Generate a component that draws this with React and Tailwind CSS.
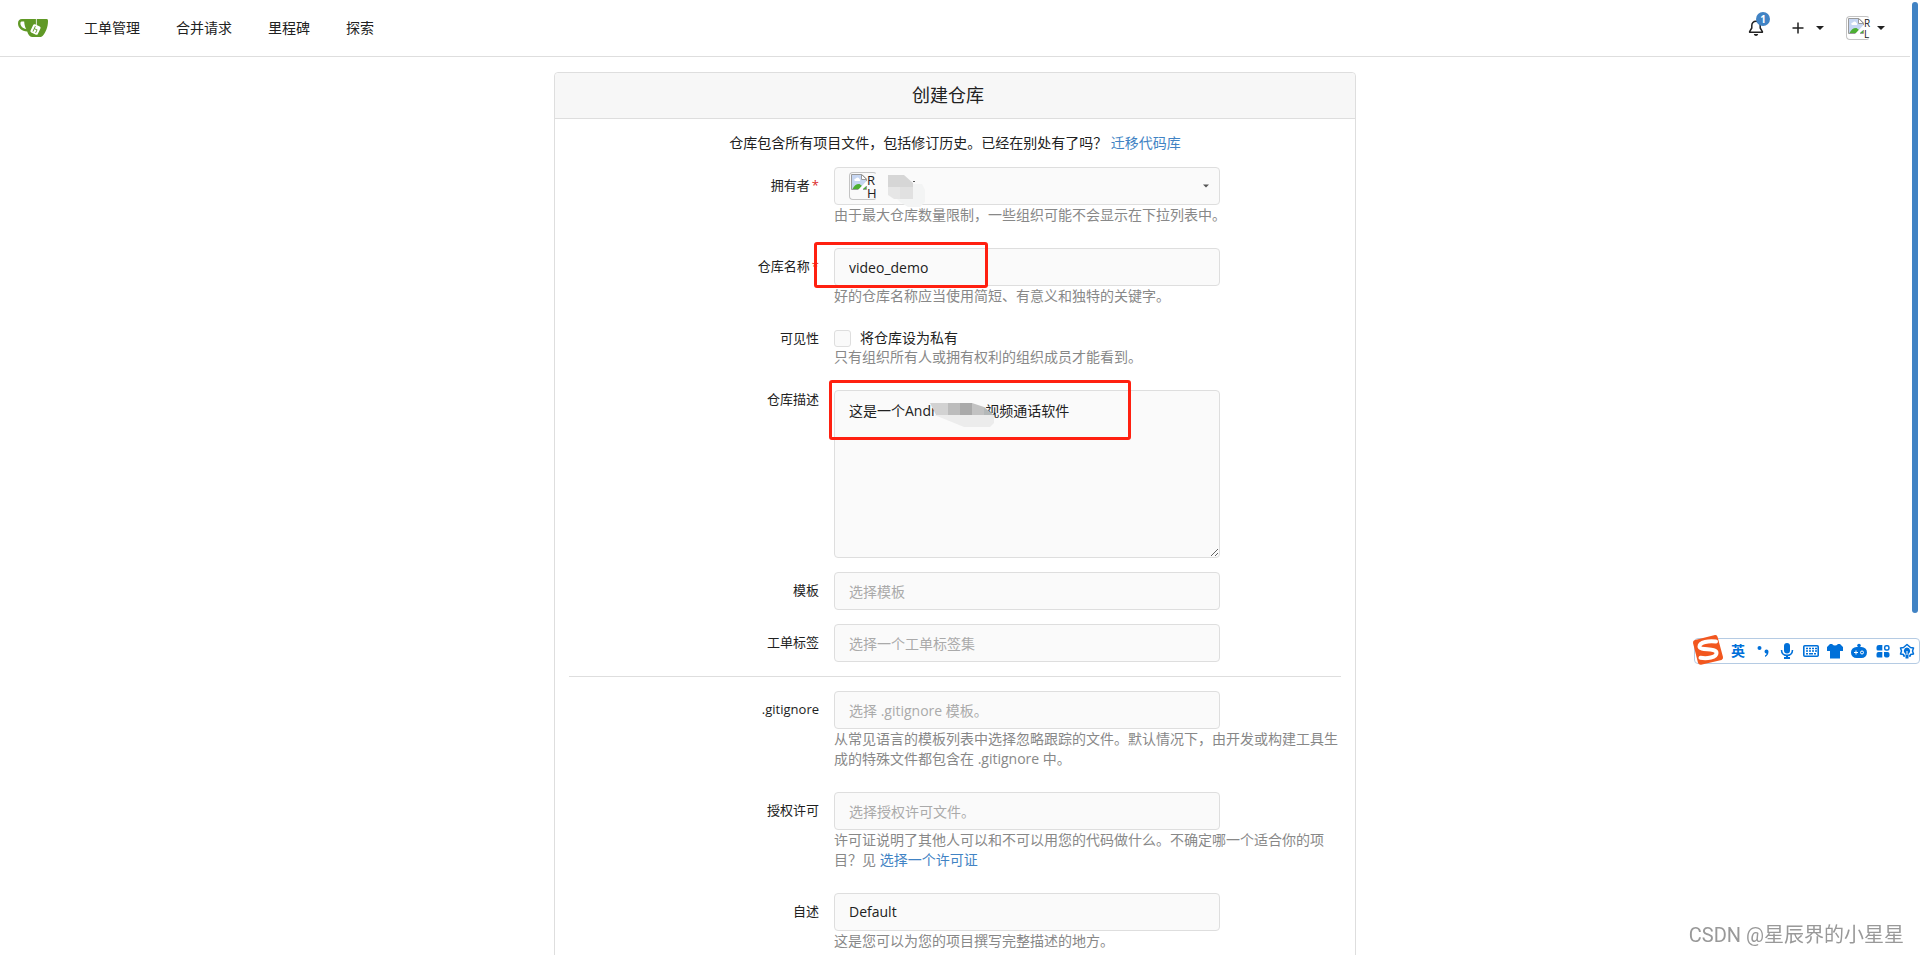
import React from 'react'
import clsx from 'clsx'

const navItems = ['工单管理', '合并请求', '里程碑', '探索']

const inputClass =
    'block w-[386px] max-w-full h-[38px] px-3.5 bg-[#fafafa] border border-[#dedede] rounded text-sm text-[#212121] placeholder:text-[#aaaaaa] outline-none'

function GiteaLogo() {
    return (
        <svg viewBox="0 0 30 20" className="w-[30px] h-5" aria-hidden="true">
            <path
                fill="#609926"
                d="M4 1H28.6C29.8 1 30 1.8 30 3C30 9 27.6 14.6 24.8 17.8C24 18.8 23 19 22 19H14C11.6 19 10 16.6 9.2 13.6C3.6 13 0 9.8 0 5.4C0 2.6 1.4 1 4 1Z"
            />
            <path fill="#fff" d="M3.6 3.4H6.2C6.3 6 7 9 8.2 11C4.8 10.2 2.4 8 2.4 5.4C2.4 4.2 2.8 3.4 3.6 3.4Z" />
            <path stroke="#fff" strokeWidth="0.8" d="M18.4 1V7" />
            <g transform="rotate(25 17.5 11.5)">
                <rect x="13.5" y="7" width="8" height="9" rx="1.4" fill="#fff" />
                <path fill="none" stroke="#609926" strokeWidth="0.9" d="M16 8.5V14.5M16 11.2H19V14.5" />
            </g>
        </svg>
    )
}

function Caret({ className }) {
    return (
        <svg viewBox="0 0 8 4" className={clsx('h-1 shrink-0', className)} aria-hidden="true">
            <path fill="currentColor" d="M0 0H8L4 4Z" />
        </svg>
    )
}

function BrokenImage() {
    return (
        <svg viewBox="0 0 16 16" className="w-4 h-4 shrink-0" aria-hidden="true">
            <path fill="#c6d6f2" d="M1 1H11L15 5V15H1Z" />
            <path fill="#fff" d="M3.5 6.5a1.5 1.5 0 0 1 1.4-2a2 2 0 0 1 3.6.4a1.3 1.3 0 0 1 .3 2.1H4Z" />
            <path fill="#4caf32" d="M1.5 15C3 11.5 6 9.5 8.5 10L11 12L9 15Z" />
            <path fill="none" stroke="#9a9a9a" d="M8.5 15.5H.5V.5H11L15.5 5V8" />
            <path fill="#fff" stroke="#9a9a9a" d="M10.5 .5V5.5H15.5Z" />
            <path fill="#fff" d="M16 6.5L7 16H10.5L16 11Z" />
            <path fill="#4caf32" d="M15 12.5V15H12Z" />
            <path fill="none" stroke="#9a9a9a" d="M15.5 12V15.5H12" />
        </svg>
    )
}

function Avatar({ letters, className }) {
    return (
        <span className={clsx('flex border border-[#c4c4c4] border-r-transparent rounded pl-px pt-px', className)}>
            <BrokenImage />
            <span className="flex flex-col">
                {letters.map((letter) => (
                    <span key={letter}>{letter}</span>
                ))}
            </span>
        </span>
    )
}

function Field({ id, label, required, top, help, children }) {
    return (
        <div className="flex gap-[15px]">
            <label
                htmlFor={id}
                className={clsx('w-[250px] shrink-0 text-right text-[13px]', top ? 'leading-[18px]' : 'leading-9')}
            >
                {label}
                {required && <span className="ml-0.5 align-top text-[#db2828]">*</span>}
            </label>
            <div className="relative flex-1 min-w-0">
                {children}
                {help && <p className="mb-[9px] text-[#888888]">{help}</p>}
            </div>
        </div>
    )
}

function Header() {
    return (
        <header className="flex items-center h-[57px] pl-[18px] pr-[25px] border-b border-[#dedede]">
            <a href="#home" aria-label="Gitea">
                <GiteaLogo />
            </a>
            <nav className="flex gap-9 ml-9">
                {navItems.map((item) => (
                    <a key={item} href="#nav">{item}</a>
                ))}
            </nav>
            <div className="flex items-center ml-auto">
                <a href="#notifications" aria-label="通知" className="relative mr-7">
                    <svg viewBox="0 0 16 16" className="w-4 h-4" fill="none" stroke="#212121" strokeWidth="1.5" aria-hidden="true">
                        <path strokeLinejoin="round" d="M8 1.2C5.4 1.2 3.8 3 3.8 5.4V8L1.6 11.6V12.2H14.4V11.6L12.2 8V5.4C12.2 3 10.6 1.2 8 1.2Z" />
                        <path fill="#212121" stroke="none" d="M5.8 14H10.2C10 15.2 9 16 8 16S6 15.2 5.8 14Z" />
                    </svg>
                    <span className="absolute left-2 -top-2 w-3.5 h-3.5 rounded-full bg-[#4183c4] text-white text-[10px] leading-[14px] font-bold text-center">
                        1
                    </span>
                </a>
                <button type="button" aria-label="创建" className="flex items-center gap-3 mr-[22px]">
                    <svg viewBox="0 0 12 12" className="w-3 h-3" stroke="#212121" strokeWidth="1.5" aria-hidden="true">
                        <path d="M6 .5V11.5M.5 6H11.5" />
                    </svg>
                    <Caret className="w-2" />
                </button>
                <button type="button" aria-label="个人信息" className="flex items-center gap-[7px]">
                    <Avatar letters={['R', 'L']} className="w-6 h-6 text-[10px] leading-[11px] text-left" />
                    <Caret className="w-2" />
                </button>
            </div>
        </header>
    )
}

function Highlight({ className }) {
    return <span className={clsx('absolute border-3 border-[#ff2010] rounded-[3px] pointer-events-none', className)} />
}

function NewRepoForm() {
    return (
        <form className="w-full max-w-[802px] mx-auto mt-[15px] border border-[#dedede] rounded">
            <h3 className="h-[46px] pr-3.5 bg-[#f7f7f7] border-b border-[#dedede] rounded-t text-lg leading-[45px] text-center">
                创建仓库
            </h3>
            <div className="flex flex-col gap-3.5 p-3.5">
                <p className="text-center">
                    仓库包含所有项目文件，包括修订历史。已经在别处有了吗？ <a href="#migrate" className="text-[#4183c4]">迁移代码库</a>
                </p>

                <Field id="owner" label="拥有者" required help="由于最大仓库数量限制，一些组织可能不会显示在下拉列表中。">
                    <button id="owner" type="button" aria-haspopup="listbox" className={clsx(inputClass, 'relative')}>
                        <span className="flex items-center justify-between">
                            <Avatar letters={['R', 'H']} className="w-7 h-7 text-[13px] leading-[13px] text-left" />
                            <Caret className="w-1.5 -mr-1 text-[#555555]" />
                        </span>
                        {/* blurred user name */}
                        <svg viewBox="0 0 40 34" className="absolute left-[51px] top-1.5 w-10 h-[34px]" aria-hidden="true">
                            <path fill="#f3f4f4" d="M10 24L26 10H36L39 16V28L34 33H22L14 28Z" />
                            <path fill="#d6d6d6" d="M2 1H18L27 9V13H2Z" />
                            <path fill="#e6e6e6" d="M2 13H27V25H8L2 21Z" />
                            <path fill="#dcdcdc" d="M14 13H27V25H14Z" opacity="0.5" />
                            <path fill="#555" d="M27 7H29V8H27Z" />
                        </svg>
                    </button>
                </Field>

                <Field id="repo_name" label="仓库名称" required help="好的仓库名称应当使用简短、有意义和独特的关键字。">
                    <input id="repo_name" type="text" defaultValue="video_demo" className={inputClass} />
                    <Highlight className="-left-5 -top-1.5 w-[174px] h-[46px]" />
                </Field>

                <Field id="private" label="可见性" top help="只有组织所有人或拥有权利的组织成员才能看到。">
                    <div className="flex items-center gap-[9px] h-[18px]">
                        <input
                            id="private"
                            type="checkbox"
                            className="appearance-none w-[17px] h-[17px] bg-[#fafafa] border border-[#dedede] rounded-[3px]"
                        />
                        <label htmlFor="private">将仓库设为私有</label>
                    </div>
                </Field>

                <Field id="description" label="仓库描述" top>
                    <textarea
                        id="description"
                        defaultValue="这是一个Android　　视频通话软件"
                        className={clsx(inputClass, 'h-[168px] py-2.5 resize-y')}
                    />
                    <svg viewBox="0 0 66 24" className="absolute left-24 top-[13px] w-[66px] h-6" aria-hidden="true">
                        <path fill="#ececec" d="M4 12H64V20L60 24H34L12 15Z" />
                        <path fill="#d2d2d2" d="M0 0H18V12H6Z" />
                        <path fill="#bcbcbc" d="M18 0H30V12H18Z" />
                        <path fill="#aaaaaa" d="M30 0H42V12H30Z" />
                        <path fill="#c2c2c2" d="M42 0L54 4V12H42Z" />
                        <path fill="#b4b8b8" d="M54 4L64 12H54Z" />
                    </svg>
                    <Highlight className="-left-[5px] -top-2.5 w-[302px] h-[60px]" />
                </Field>

                <Field id="template" label="模板">
                    <input id="template" type="text" placeholder="选择模板" className={inputClass} />
                </Field>

                <Field id="labels" label="工单标签">
                    <input id="labels" type="text" placeholder="选择一个工单标签集" className={inputClass} />
                </Field>

                <hr className="border-[#dedede]" />

                <Field
                    id="gitignore"
                    label=".gitignore"
                    help="从常见语言的模板列表中选择忽略跟踪的文件。默认情况下，由开发或构建工具生成的特殊文件都包含在 .gitignore 中。"
                >
                    <input id="gitignore" type="text" placeholder="选择 .gitignore 模板。" className={inputClass} />
                </Field>

                <Field
                    id="license"
                    label="授权许可"
                    help={
                        <>
                            许可证说明了其他人可以和不可以用您的代码做什么。不确定哪一个适合你的项目？见{' '}
                            <a href="#license" className="text-[#4183c4]">选择一个许可证</a>
                        </>
                    }
                >
                    <input id="license" type="text" placeholder="选择授权许可文件。" className={inputClass} />
                </Field>

                <Field id="readme" label="自述" help="这是您可以为您的项目撰写完整描述的地方。">
                    <select id="readme" className={clsx(inputClass, 'appearance-none')}>
                        <option>Default</option>
                    </select>
                </Field>
            </div>
        </form>
    )
}

// Floating toolbar of the input method
function ImeBar() {
    return (
        <div className="fixed right-0 top-[638px] flex items-center gap-2 h-[26px] pl-9 pr-1 bg-white border border-[#b5cbe3] rounded-sm text-[#0070d9]">
            <svg viewBox="0 0 32 32" className="absolute -left-[3px] -top-[5px] w-8 h-8" aria-hidden="true">
                <path fill="#f2571f" d="M3 6L23 1Q25 .6 25.6 3L31 23Q31.4 25 29.5 26L9 30.8Q6.6 31 6 28.8L1 9Q.7 6.7 3 6Z" />
                <path
                    fill="none"
                    stroke="#fff"
                    strokeWidth="4"
                    strokeLinecap="round"
                    d="M24 7.5C17 6.5 7.5 8 7.5 12.5C7.5 17 24.5 13.5 24.5 19C24.5 23.5 15 25 8.5 23.8"
                />
            </svg>
            <span className="w-4 text-[14px] leading-4 font-bold">英</span>
            <svg viewBox="0 0 16 16" className="w-4 h-4" fill="currentColor" aria-hidden="true">
                <circle cx="4.5" cy="5" r="2" />
                <path d="M9.5 8.5A2 2 0 0 1 13.5 8.5C13.5 11 12.5 13 10 14V12.5C11 12 11.5 11.5 11.5 10.5A2 2 0 0 1 9.5 8.5Z" />
            </svg>
            <svg viewBox="0 0 16 16" className="w-4 h-4" fill="currentColor" aria-hidden="true">
                <rect x="5" y="0" width="6" height="10.5" rx="3" />
                <path fill="none" stroke="currentColor" strokeWidth="1.6" d="M2.5 7C2.5 14.2 13.5 14.2 13.5 7" />
                <path d="M7 12H9V14H11V16H5V14H7Z" />
            </svg>
            <svg viewBox="0 0 16 16" className="w-4 h-4" aria-hidden="true">
                <rect x="0.8" y="2.8" width="14.4" height="10.4" rx="1" fill="none" stroke="currentColor" strokeWidth="1.6" />
                <path stroke="currentColor" strokeWidth="1.5" strokeDasharray="2 1" d="M3 5.5H14M3 8H14" />
                <path stroke="currentColor" strokeWidth="1.5" d="M3 10.7H5M6 10.7H10M11 10.7H13" />
            </svg>
            <svg viewBox="0 0 16 16" className="w-4 h-4" fill="currentColor" aria-hidden="true">
                <path d="M5 1Q8 4 11 1H13L16 4V8H13V15.500H3V8H0V4L3 1Z" />
            </svg>
            <svg viewBox="0 0 16 16" className="w-4 h-4" aria-hidden="true">
                <rect x="0" y="4" width="16" height="11" rx="5.5" fill="currentColor" />
                <circle cx="8" cy="2.5" r="1.8" fill="currentColor" />
                <path stroke="#fff" d="M3 9.5H7M5 7.5V11.5" />
                <circle cx="11" cy="9.5" r="1.5" fill="none" stroke="#fff" />
            </svg>
            <svg viewBox="0 0 16 16" className="w-4 h-4" fill="currentColor" aria-hidden="true">
                <path d="M4 2H7.3V7.5H3Q1.5 7.5 1.5 6V4Q1.5 2 4 2Z" />
                <path d="M3.5 9H7.3V14.5H3Q1.5 14.5 1.5 13V11Q1.5 9 3.5 9Z" />
                <path d="M9 9H12.5Q14.5 9 14.5 11V12.5Q14.5 14.5 12.5 14.5H11Q9 14.5 9 12.5Z" />
                <rect x="9.7" y="2.7" width="4.2" height="4.2" rx="1.5" fill="none" stroke="currentColor" strokeWidth="1.5" />
            </svg>
            <svg viewBox="0 0 16 16" className="w-4 h-4" aria-hidden="true">
                <path
                    fill="none"
                    stroke="currentColor"
                    strokeWidth="1.5"
                    strokeLinejoin="round"
                    d="M6 13H4.800L4.500 11.500L1.500 11L2.500 8L1.500 5L4.500 4.500L8 1.500L11.500 4.500L14.500 5L13.500 8L14.500 11L11.500 11.500L11.200 13H10"
                />
                <path fill="currentColor" d="M8 4.500A3.500 3.500 0 0 1 9.500 11V15.500H6.500V11A3.500 3.500 0 0 1 8 4.500Z" />
                <path stroke="#fff" d="M8 8V12" />
            </svg>
        </div>
    )
}

export default function App() {
    return (
        <div className="relative h-screen overflow-hidden pr-2.5 bg-white text-sm text-[#212121] font-['Open_Sans','Noto_Sans_CJK_SC',sans-serif]">
            <Header />
            <main>
                <NewRepoForm />
            </main>

            {/* Scrollbar thumb */}
            <div className="fixed right-0.5 top-0.5 w-1.5 h-[64%] bg-[#4183c4] rounded-full" />
            <ImeBar />
            <p className="fixed right-4 bottom-1.5 text-xl text-[#999999] font-[Roboto,'Noto_Sans_CJK_SC',sans-serif]">
                CSDN @星辰界的小星星
            </p>
        </div>
    )
}
